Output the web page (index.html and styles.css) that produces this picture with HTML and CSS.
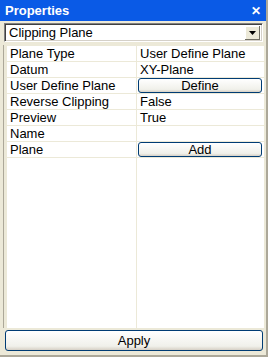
FILE: index.html
```html
<!DOCTYPE html>
<html lang="en">
<head>
    <meta charset="UTF-8">
    <title>Properties</title>
    <link rel="stylesheet" href="styles.css">
</head>
<body>
    <div class="panel">
        <div class="titlebar">
            <span class="title">Properties</span>
            <span class="close">&#x2715;</span>
        </div>
        <div class="combo">
            <span class="combo-text">Clipping Plane</span>
            <span class="combo-btn">
                <svg width="7" height="4" viewBox="0 0 7 4"><path d="M0 0h7L3.5 4z" fill="#000"/></svg>
            </span>
        </div>
        <div class="grid-frame">
            <div class="grid">
                <div class="row"><div class="cell name">Plane Type</div><div class="cell value">User Define Plane</div></div>
                <div class="row"><div class="cell name">Datum</div><div class="cell value">XY-Plane</div></div>
                <div class="row"><div class="cell name">User Define Plane</div><div class="cell value btn-cell"><button class="btn small">Define</button></div></div>
                <div class="row"><div class="cell name">Reverse Clipping</div><div class="cell value">False</div></div>
                <div class="row"><div class="cell name">Preview</div><div class="cell value">True</div></div>
                <div class="row"><div class="cell name">Name</div><div class="cell value"></div></div>
                <div class="row"><div class="cell name">Plane</div><div class="cell value btn-cell"><button class="btn small">Add</button></div></div>
                <div class="row filler"><div class="cell name"></div><div class="cell value"></div></div>
            </div>
        </div>
        <div class="footer">
            <button class="btn apply">Apply</button>
        </div>
    </div>
</body>
</html>
```

FILE: styles.css
```css
html, body {
    margin: 0;
    padding: 0;
}
body {
    width: 268px;
    height: 357px;
    background: #ece9d8;
    font-family: "Liberation Sans", Arial, sans-serif;
    font-size: 13px;
    color: #000;
    overflow: hidden;
}
.panel {
    display: flex;
    flex-direction: column;
    height: 357px;
    box-sizing: border-box;
    border-right: 2px solid #aca899;
    border-bottom: 2px solid #aca899;
}
.titlebar {
    height: 21px;
    background: #0a5ae6;
    color: #fff;
    display: flex;
    align-items: center;
    justify-content: space-between;
    padding: 0 5px 0 5px;
}
.title {
    font-weight: bold;
    font-size: 13px;
}
.close {
    font-size: 12px;
    font-weight: bold;
}
.combo {
    margin: 2px 3px 0 4px;
    height: 19px;
    box-sizing: border-box;
    background: #fff;
    border-top: 1px solid #808080;
    border-left: 1px solid #808080;
    border-right: 1px solid #fff;
    border-bottom: 1px solid #fff;
    box-shadow: inset 1px 1px 0 #404040, inset -1px -1px 0 #d4d0c8;
    display: flex;
    align-items: center;
    justify-content: space-between;
    padding: 0 2px 0 4px;
}
.combo-btn {
    width: 15px;
    height: 14px;
    background: #ece9d8;
    display: flex;
    align-items: center;
    justify-content: center;
    box-shadow: inset -1px -1px 0 #716f64, inset 1px 1px 0 #fff;
}
.grid-frame {
    flex: 1;
    margin: 3px 2px 0 3px;
    border-left: 1px solid #aca899;
    padding: 0 0 0 2px;
    display: flex;
    flex-direction: column;
}
.grid {
    flex: 1;
    background: #fff;
    display: flex;
    flex-direction: column;
    border-left: 1px solid #ece9d8;
    border-top: 1px solid #ece9d8;
}
.row {
    display: flex;
    height: 15px;
    border-bottom: 1px solid #ece9d8;
}
.row.filler {
    flex: 1;
    border-bottom: none;
}
.cell {
    line-height: 15px;
    padding-left: 3px;
    white-space: nowrap;
}
.cell.name {
    width: 126px;
    border-right: 1px solid #ece9d8;
}
.cell.value {
    flex: 1;
}
.btn-cell {
    padding: 0 2px 0 1px;
}
.btn {
    font-family: "Liberation Sans", Arial, sans-serif;
    font-size: 13px;
    color: #000;
    border: 1px solid #003c74;
    border-radius: 3px;
    background: linear-gradient(#fff, #f0f0ea 80%, #d6d0c5);
    padding: 0;
}
.btn.small {
    width: 100%;
    height: 15px;
    line-height: 13px;
}
.footer {
    padding: 2px 3px 4px 5px;
}
.btn.apply {
    width: 100%;
    height: 21px;
}
```
